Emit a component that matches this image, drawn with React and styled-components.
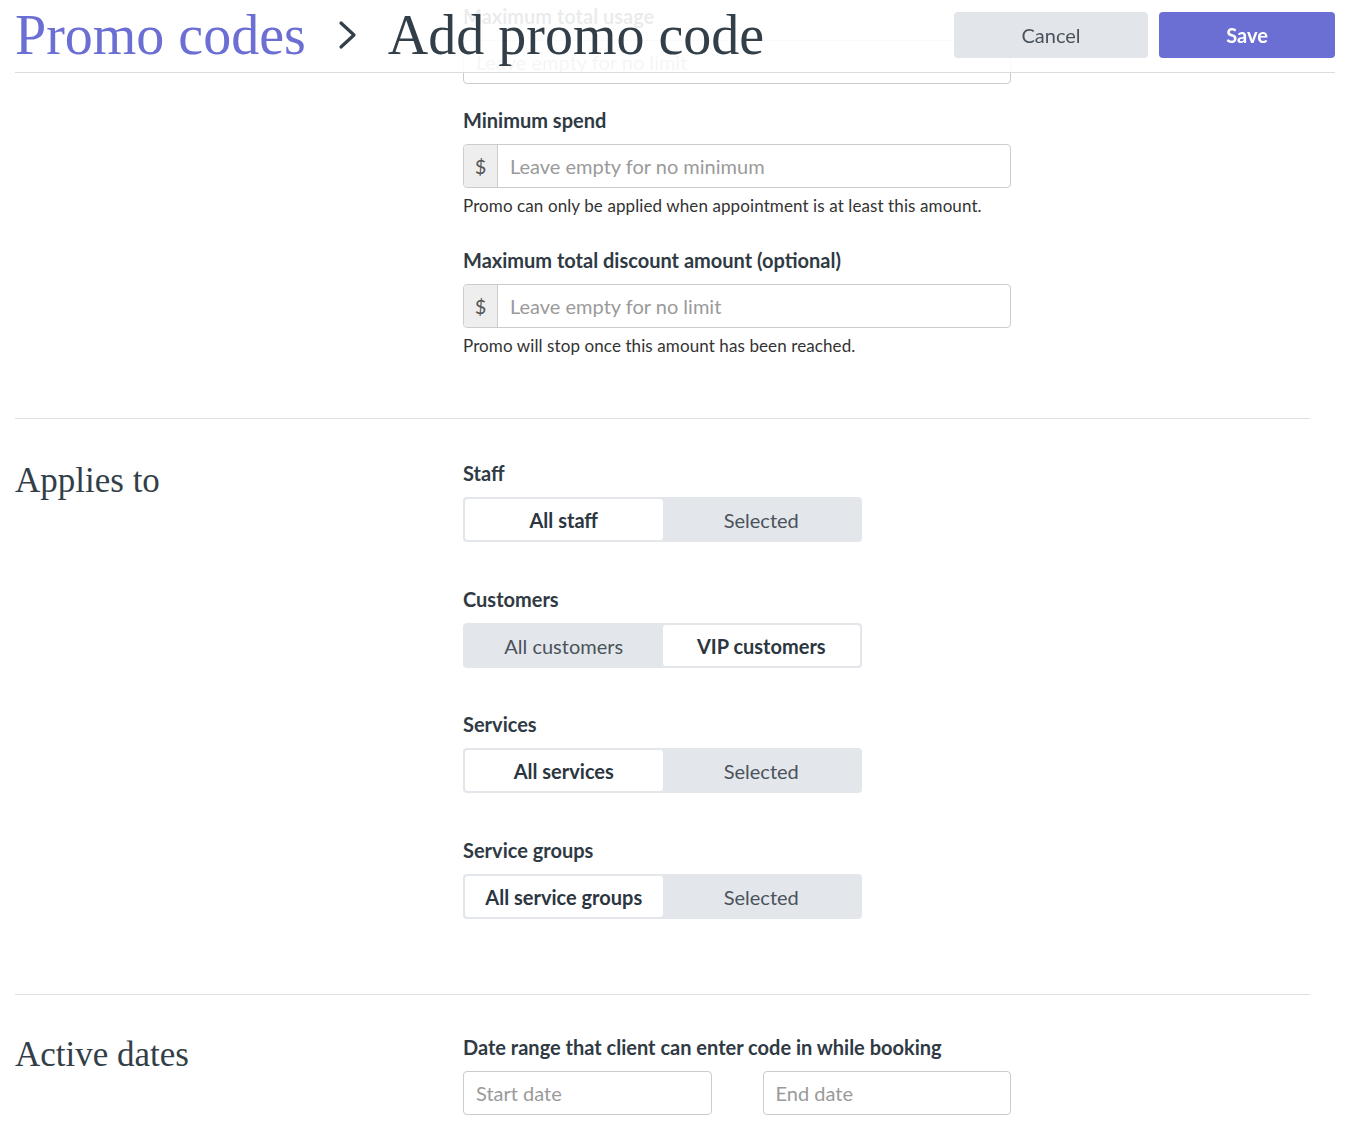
import React, { useState } from 'react';
import styled, { createGlobalStyle } from 'styled-components';

const GlobalStyle = createGlobalStyle`
  body {
    margin: 0;
    background: #fff;
    font-family: Lato, "Noto Sans", sans-serif;
    color: #333f48;
  }
  * {
    box-sizing: border-box;
  }
`;

const ChevronIcon = () => (
  <svg width="22" height="32" viewBox="0 0 22 32" fill="none">
    <polyline
      points="5,4 18,16 5,28"
      stroke="#333f48"
      strokeWidth="3.2"
      strokeLinecap="round"
      strokeLinejoin="round"
    />
  </svg>
);

const SegmentedControl = ({ options, initial }) => {
  const [value, setValue] = useState(initial);
  return (
    <Toggle>
      {options.map(option => (
        <ToggleOption
          key={option}
          type="button"
          $active={value === option}
          onClick={() => setValue(option)}
        >
          {option}
        </ToggleOption>
      ))}
    </Toggle>
  );
};

const App = () => {
  return (
    <>
      <GlobalStyle />
      <Header>
        <HeaderInner>
          <Breadcrumb>
            <Crumb $link>Promo codes</Crumb>
            <ChevronIcon />
            <Crumb>Add promo code</Crumb>
          </Breadcrumb>
          <Actions>
            <Button type="button">Cancel</Button>
            <Button type="button" $primary>Save</Button>
          </Actions>
        </HeaderInner>
      </Header>

      <Main>
        <Section $first $top={4} $bottom={30}>
          <div />
          <div>
            <Field $gap={24}>
              <Label>Maximum total usage</Label>
              <InputGroup>
                <Input placeholder="Leave empty for no limit" />
              </InputGroup>
            </Field>
            <Field $gap={30}>
              <Label>Minimum spend</Label>
              <InputGroup>
                <Addon>$</Addon>
                <Input placeholder="Leave empty for no minimum" />
              </InputGroup>
              <Help>Promo can only be applied when appointment is at least this amount.</Help>
            </Field>
            <Field $gap={30}>
              <Label>Maximum total discount amount (optional)</Label>
              <InputGroup>
                <Addon>$</Addon>
                <Input placeholder="Leave empty for no limit" />
              </InputGroup>
              <Help>Promo will stop once this amount has been reached.</Help>
            </Field>
          </div>
        </Section>

        <Section $bottom={30}>
          <SectionTitle>Applies to</SectionTitle>
          <div>
            <Field $gap={45}>
              <Label>Staff</Label>
              <SegmentedControl options={['All staff', 'Selected']} initial="All staff" />
            </Field>
            <Field $gap={44}>
              <Label>Customers</Label>
              <SegmentedControl options={['All customers', 'VIP customers']} initial="VIP customers" />
            </Field>
            <Field $gap={45}>
              <Label>Services</Label>
              <SegmentedControl options={['All services', 'Selected']} initial="All services" />
            </Field>
            <Field $gap={45}>
              <Label>Service groups</Label>
              <SegmentedControl options={['All service groups', 'Selected']} initial="All service groups" />
            </Field>
          </div>
        </Section>

        <Section $top={40}>
          <SectionTitle>Active dates</SectionTitle>
          <div>
            <Field $gap={0}>
              <Label>Date range that client can enter code in while booking</Label>
              <DateRow>
                <InputGroup>
                  <Input placeholder="Start date" />
                </InputGroup>
                <InputGroup>
                  <Input placeholder="End date" />
                </InputGroup>
              </DateRow>
            </Field>
          </div>
        </Section>
      </Main>
    </>
  );
};

const Header = styled.header`
  position: fixed;
  top: 0;
  left: 0;
  right: 0;
  z-index: 10;
  padding: 0 33px 0 15px;
  background: rgba(255, 255, 255, 0.9);
`;

const HeaderInner = styled.div`
  display: flex;
  align-items: center;
  justify-content: space-between;
  height: 73px;
  padding-bottom: 2px;
  border-bottom: 1px solid #dcdcdc;
`;

const Breadcrumb = styled.div`
  display: flex;
  align-items: center;
  gap: 30px;
`;

const Crumb = styled.span`
  font-family: "Liberation Serif", "DejaVu Serif", serif;
  font-size: 56px;
  line-height: 1;
  color: ${p => (p.$link ? '#6b6fd4' : '#333f48')};
`;

const Actions = styled.div`
  display: flex;
  gap: 11px;
`;

const Button = styled.button`
  width: ${p => (p.$primary ? '176px' : '194px')};
  height: 46px;
  border: none;
  border-radius: 4px;
  background: ${p => (p.$primary ? '#6b6fd4' : '#e2e5e9')};
  color: ${p => (p.$primary ? '#fff' : '#4a535c')};
  font-family: Lato, sans-serif;
  font-size: 20px;
  font-weight: ${p => (p.$primary ? 700 : 400)};
  cursor: pointer;
`;

const Main = styled.main`
  padding: 0 58px 0 15px;
`;

const Section = styled.section`
  display: grid;
  grid-template-columns: 448px 548px;
  padding: ${p => p.$top ?? 42}px 0 ${p => p.$bottom ?? 32}px;
  border-top: ${p => (p.$first ? 'none' : '1px solid #e0e0e0')};
`;

const SectionTitle = styled.h2`
  margin: 0;
  font-family: "Liberation Serif", "DejaVu Serif", serif;
  font-size: 35px;
  font-weight: 400;
  line-height: 40px;
  color: #333f48;
`;

const Field = styled.div`
  margin-bottom: ${p => p.$gap}px;
`;

const Label = styled.div`
  font-size: 20px;
  font-weight: 700;
  line-height: 24px;
  margin-bottom: 12px;
  color: #2f3a44;
`;

const InputGroup = styled.div`
  display: flex;
  height: 44px;
  border: 1px solid #cccccc;
  border-radius: 4px;
  overflow: hidden;
  background: #fff;
`;

const Addon = styled.span`
  width: 34px;
  display: flex;
  align-items: center;
  justify-content: center;
  background: #eeeeee;
  border-right: 1px solid #cccccc;
  color: #555;
  font-size: 20px;
`;

const Input = styled.input`
  flex: 1;
  min-width: 0;
  border: none;
  outline: none;
  padding: 0 12px;
  font-family: Lato, sans-serif;
  font-size: 20px;
  color: #333;
  background: transparent;
  &::placeholder {
    color: #9a9a9a;
  }
`;

const Help = styled.p`
  margin: 6px 0 0;
  font-size: 17px;
  line-height: 24px;
  letter-spacing: 0.1px;
  color: #333;
`;

const Toggle = styled.div`
  display: flex;
  width: 399px;
  height: 45px;
  padding: 2px;
  background: #e3e6ea;
  border-radius: 4px;
`;

const ToggleOption = styled.button`
  flex: 1;
  border: none;
  border-radius: 3px;
  background: ${p => (p.$active ? '#fff' : 'transparent')};
  font-family: Lato, sans-serif;
  font-size: 20px;
  font-weight: ${p => (p.$active ? 700 : 400)};
  color: ${p => (p.$active ? '#2c3640' : '#4a535c')};
  cursor: pointer;
`;

const DateRow = styled.div`
  display: grid;
  grid-template-columns: 1fr 1fr;
  gap: 51px;
`;

export default App;
